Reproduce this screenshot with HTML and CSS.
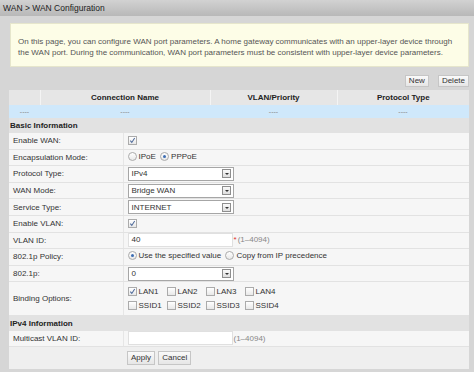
FILE: index.html
```html
<!DOCTYPE html>
<html lang="en">
<head>
    <meta charset="UTF-8">
    <title>WAN Configuration</title>
    <link rel="stylesheet" href="styles.css">
</head>
<body>
    <div class="titlebar">WAN &gt; WAN Configuration</div>

    <div class="main">
        <!-- Notice -->
        <div class="notice">
            <p>On this page, you can configure WAN port parameters. A home gateway communicates with an upper-layer device through the WAN port. During the communication, WAN port parameters must be consistent with upper-layer device parameters.</p>
        </div>

        <div class="toolbar">
            <button class="btn">New</button>
            <button class="btn">Delete</button>
        </div>

        <!-- Connection list -->
        <table class="list">
            <colgroup>
                <col class="c1"><col class="c2"><col class="c3"><col>
            </colgroup>
            <tr class="list-head">
                <th></th>
                <th>Connection Name</th>
                <th>VLAN/Priority</th>
                <th>Protocol Type</th>
            </tr>
            <tr class="list-row">
                <td>----</td>
                <td>----</td>
                <td>----</td>
                <td>----</td>
            </tr>
        </table>

        <!-- Config form -->
        <table class="form">
            <colgroup>
                <col class="col-label"><col>
            </colgroup>
            <tr class="section"><td colspan="2">Basic Information</td></tr>
            <tr>
                <td class="label">Enable WAN:</td>
                <td class="value"><span class="cb on"><svg viewBox="0 0 8 8"><path d="M1.5 4.2 L3.2 6.2 L6.5 1.2" /></svg></span></td>
            </tr>
            <tr>
                <td class="label">Encapsulation Mode:</td>
                <td class="value">
                    <span class="opt"><span class="rd"></span>IPoE</span>
                    <span class="opt"><span class="rd on"></span>PPPoE</span>
                </td>
            </tr>
            <tr>
                <td class="label">Protocol Type:</td>
                <td class="value"><span class="sel">IPv4<span class="arr"></span></span></td>
            </tr>
            <tr>
                <td class="label">WAN Mode:</td>
                <td class="value"><span class="sel">Bridge WAN<span class="arr"></span></span></td>
            </tr>
            <tr>
                <td class="label">Service Type:</td>
                <td class="value"><span class="sel">INTERNET<span class="arr"></span></span></td>
            </tr>
            <tr>
                <td class="label">Enable VLAN:</td>
                <td class="value"><span class="cb on"><svg viewBox="0 0 8 8"><path d="M1.5 4.2 L3.2 6.2 L6.5 1.2" /></svg></span></td>
            </tr>
            <tr>
                <td class="label">VLAN ID:</td>
                <td class="value"><span class="txt">40</span><span class="req">*</span><span class="hint">(1–4094)</span></td>
            </tr>
            <tr>
                <td class="label">802.1p Policy:</td>
                <td class="value">
                    <span class="opt"><span class="rd on"></span>Use the specified value</span>
                    <span class="opt"><span class="rd"></span>Copy from IP precedence</span>
                </td>
            </tr>
            <tr>
                <td class="label">802.1p:</td>
                <td class="value"><span class="sel">0<span class="arr"></span></span></td>
            </tr>
            <tr class="tall">
                <td class="label">Binding Options:</td>
                <td class="value">
                    <div class="binds">
                        <span class="opt"><span class="cb on"><svg viewBox="0 0 8 8"><path d="M1.5 4.2 L3.2 6.2 L6.5 1.2" /></svg></span>LAN1</span>
                        <span class="opt"><span class="cb"></span>LAN2</span>
                        <span class="opt"><span class="cb"></span>LAN3</span>
                        <span class="opt"><span class="cb"></span>LAN4</span>
                        <span class="opt"><span class="cb"></span>SSID1</span>
                        <span class="opt"><span class="cb"></span>SSID2</span>
                        <span class="opt"><span class="cb"></span>SSID3</span>
                        <span class="opt"><span class="cb"></span>SSID4</span>
                    </div>
                </td>
            </tr>
            <tr class="section"><td colspan="2">IPv4 Information</td></tr>
            <tr>
                <td class="label">Multicast VLAN ID:</td>
                <td class="value"><span class="txt"></span><span class="hint">(1–4094)</span></td>
            </tr>
            <tr class="actions">
                <td></td>
                <td class="value">
                    <button class="btn">Apply</button>
                    <button class="btn">Cancel</button>
                </td>
            </tr>
        </table>
    </div>
</body>
</html>
```

FILE: styles.css
```css
body {
    margin: 0;
    width: 474px;
    height: 372px;
    overflow: hidden;
    background: #d6d6d6;
    font-family: 'Liberation Sans', Arial, sans-serif;
    font-size: 8px;
    color: #333;
}

.titlebar {
    height: 16px;
    line-height: 16px;
    padding-left: 3px;
    background: linear-gradient(#d2d2d2, #b8b8b8);
    font-size: 8.5px;
    color: #222;
}

.main {
    padding: 7px 5px 0 9px;
}

.notice {
    height: 44px;
    box-sizing: border-box;
    margin-left: 1px;
    padding: 4px 7px 0;
    display: flex;
    align-items: center;
    background: #fdfde7;
    border: 1px solid #e6e6cc;
    color: #555;
    line-height: 11px;
}

.notice p {
    margin: 0;
}

.toolbar {
    display: flex;
    justify-content: flex-end;
    gap: 9px;
    padding: 8px 0 3px;
}

.btn {
    height: 12px;
    padding: 0 3px;
    background: linear-gradient(#fafafa, #e6e6e6);
    border: 1px solid #c6c6c6;
    border-radius: 0;
    font-family: inherit;
    font-size: 8px;
    color: #333;
    line-height: 10px;
}

table {
    width: 460px;
    border-collapse: collapse;
    table-layout: fixed;
}

td, th {
    padding: 0;
}

/* connection list */
.list-head th {
    height: 15px;
    background: #e6e6e6;
    border-right: 1px solid #f4f4f4;
    font-weight: bold;
    color: #222;
}

.list-head th:last-child {
    border-right: none;
}

.c1 { width: 31px; }
.c2 { width: 170px; }
.c3 { width: 127px; }

.list-row td {
    height: 13px;
    background: #cfe8fb;
    text-align: center;
    color: #888;
    font-size: 7px;
}

/* form */
.col-label { width: 114px; }

.form td {
    height: 15.6px;
    border-bottom: 1px solid #e2e2e2;
    background: #f6f6f6;
    white-space: nowrap;
}

.form .label {
    padding-left: 4px;
    border-right: 1px solid #e6e6e6;
}

.form .value {
    padding-left: 4px;
}

.form .section td {
    height: 15px;
    background: #e2e2e2;
    border-bottom: none;
    padding-left: 1px;
    font-weight: bold;
    color: #222;
}

.form .tall td {
    height: 32.3px;
}

.form .actions td {
    height: 22px;
    background: #efefef;
    border-bottom: none;
    border-right: none;
}

.binds {
    display: grid;
    grid-template-columns: repeat(4, 39px);
    row-gap: 5px;
}

.opt {
    display: inline-flex;
    align-items: center;
    margin-right: 2px;
}

.cb, .rd {
    display: inline-block;
    width: 7px;
    height: 7px;
    margin-right: 2px;
    border: 1px solid #ababab;
    background: linear-gradient(#fff, #e8e8e8);
    vertical-align: middle;
    position: relative;
}

.cb svg {
    display: block;
    width: 7px;
    height: 7px;
}

.cb path {
    fill: none;
    stroke: #4e6a9a;
    stroke-width: 1.2;
}

.rd {
    border-radius: 50%;
}

.rd.on::after {
    content: "";
    position: absolute;
    left: 2px;
    top: 2px;
    width: 3px;
    height: 3px;
    border-radius: 50%;
    background: #3d6db3;
}

.sel {
    display: inline-flex;
    align-items: center;
    justify-content: space-between;
    width: 106px;
    height: 14px;
    box-sizing: border-box;
    padding: 0 2px 0 3px;
    background: #fff;
    border: 1px solid #a6a6a6;
    vertical-align: middle;
}

.arr {
    width: 9px;
    height: 9px;
    box-sizing: border-box;
    border: 1px solid #8e8e8e;
    background: linear-gradient(#fafafa, #dedede);
    position: relative;
}

.arr::after {
    content: "";
    position: absolute;
    left: 2px;
    top: 3px;
    border-left: 2px solid transparent;
    border-right: 2px solid transparent;
    border-top: 2px solid #333;
}

.txt {
    display: inline-block;
    width: 105px;
    height: 14px;
    box-sizing: border-box;
    padding-left: 3px;
    line-height: 12px;
    background: #fff;
    border: 1px solid #e0e0e0;
    vertical-align: middle;
}

.req {
    color: #e03030;
    margin-left: 1px;
}

.hint {
    color: #888;
    margin-left: 1px;
}

.actions .btn {
    height: 14px;
    margin-right: 1px;
}
```
